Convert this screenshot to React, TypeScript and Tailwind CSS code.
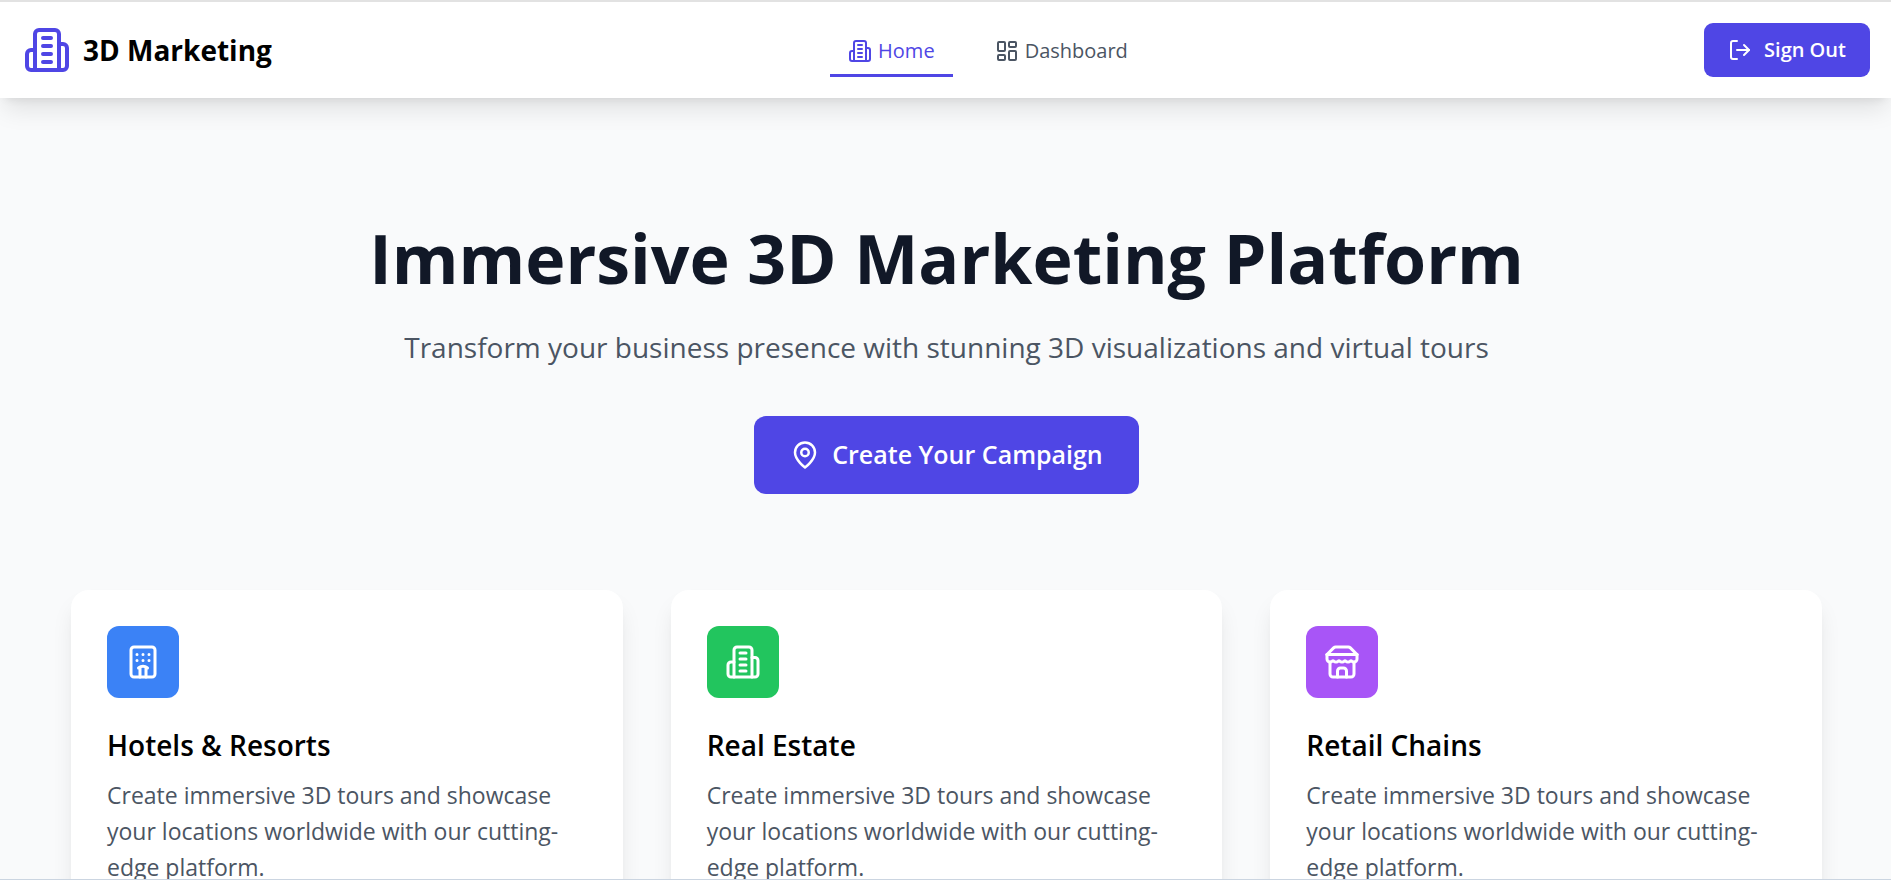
import type { ReactNode } from 'react';

interface IconProps {
  className?: string;
  children?: ReactNode;
}

function Icon({ className, children }: IconProps) {
  return (
    <svg
      viewBox="0 0 24 24"
      fill="none"
      stroke="currentColor"
      strokeWidth={2}
      strokeLinecap="round"
      strokeLinejoin="round"
      aria-hidden="true"
      className={className}
    >
      {children}
    </svg>
  );
}

function BuildingIcon({ className }: IconProps) {
  return (
    <Icon className={className}>
      <path d="M6 22V4a2 2 0 0 1 2-2h8a2 2 0 0 1 2 2v18Z" />
      <path d="M6 12H4a2 2 0 0 0-2 2v6a2 2 0 0 0 2 2h2" />
      <path d="M18 9h2a2 2 0 0 1 2 2v9a2 2 0 0 1-2 2h-2" />
      <path d="M10 6h4M10 10h4M10 14h4M10 18h4" />
    </Icon>
  );
}

function DashboardIcon({ className }: IconProps) {
  return (
    <Icon className={className}>
      <rect width="7" height="9" x="3" y="3" rx="1" />
      <rect width="7" height="5" x="14" y="3" rx="1" />
      <rect width="7" height="9" x="14" y="12" rx="1" />
      <rect width="7" height="5" x="3" y="16" rx="1" />
    </Icon>
  );
}

function LogOutIcon({ className }: IconProps) {
  return (
    <Icon className={className}>
      <path d="M9 21H5a2 2 0 0 1-2-2V5a2 2 0 0 1 2-2h4" />
      <path d="m16 17 5-5-5-5" />
      <path d="M21 12H9" />
    </Icon>
  );
}

function PinIcon({ className }: IconProps) {
  return (
    <Icon className={className}>
      <path d="M20 10c0 6-8 12-8 12s-8-6-8-12a8 8 0 0 1 16 0Z" />
      <circle cx="12" cy="10" r="3" />
    </Icon>
  );
}

function HotelIcon({ className }: IconProps) {
  return (
    <Icon className={className}>
      <rect width="16" height="20" x="4" y="2" rx="2" />
      <path d="M10 22v-6.57M14 15.43V22" />
      <path d="M15 16a5 5 0 0 0-6 0" />
      <path d="M8 7h.01M12 7h.01M16 7h.01M8 11h.01M12 11h.01M16 11h.01" />
    </Icon>
  );
}

function StoreIcon({ className }: IconProps) {
  return (
    <Icon className={className}>
      <path d="m2 7 4.41-4.41A2 2 0 0 1 7.83 2h8.34a2 2 0 0 1 1.42.59L22 7" />
      <path d="M4 12v8a2 2 0 0 0 2 2h12a2 2 0 0 0 2-2v-8" />
      <path d="M15 22v-4a2 2 0 0 0-2-2h-2a2 2 0 0 0-2 2v4" />
      <path d="M2 7h20" />
      <path d="M22 7v3a2 2 0 0 1-2 2a2.7 2.7 0 0 1-1.59-.63.7.7 0 0 0-.82 0A2.7 2.7 0 0 1 16 12a2.7 2.7 0 0 1-1.59-.63.7.7 0 0 0-.82 0A2.7 2.7 0 0 1 12 12a2.7 2.7 0 0 1-1.59-.63.7.7 0 0 0-.82 0A2.7 2.7 0 0 1 8 12a2.7 2.7 0 0 1-1.59-.63.7.7 0 0 0-.82 0A2.7 2.7 0 0 1 4 12a2 2 0 0 1-2-2V7" />
    </Icon>
  );
}

const features = [
  { title: 'Hotels & Resorts', icon: HotelIcon, color: 'bg-[#3b82f6]' },
  { title: 'Real Estate', icon: BuildingIcon, color: 'bg-[#22c55e]' },
  { title: 'Retail Chains', icon: StoreIcon, color: 'bg-[#a855f7]' },
];

function Navbar() {
  return (
    <header className="border-t-2 border-[#e2e2e2] bg-white shadow-[0_15px_23px_-4px_rgba(0,0,0,0.1),0_6px_9px_-6px_rgba(0,0,0,0.1)]">
      <div className="flex h-24 items-center justify-between pr-[21px] pl-[23px]">
        <a href="#" className="flex items-center gap-3 text-black">
          <BuildingIcon className="size-12 text-[#4f46e5]" />
          <span className="text-[28px] font-bold">3D Marketing</span>
        </a>

        <nav className="flex gap-6 text-[20px] font-medium">
          <a
            href="#home"
            className="flex h-[54px] items-center gap-1.5 border-b-3 border-[#4f46e5] px-4.5 pt-1 text-[#4f46e5]"
          >
            <BuildingIcon className="size-6" />
            Home
          </a>
          <a
            href="#dashboard"
            className="flex h-[54px] items-center gap-1.5 border-b-3 border-transparent px-4.5 pt-1 text-[#4b5563]"
          >
            <DashboardIcon className="size-6" />
            Dashboard
          </a>
        </nav>

        <button
          type="button"
          className="flex h-[54px] items-center gap-3 rounded-[9px] bg-[#4f46e5] px-6 text-[20px] font-semibold text-white"
        >
          <LogOutIcon className="size-6" />
          Sign Out
        </button>
      </div>
    </header>
  );
}

export default function App() {
  return (
    <div className="h-screen overflow-hidden border-b border-[#cbd5e1] bg-[#f9fafb] font-['Segoe_UI','Open_Sans',sans-serif]">
      <Navbar />

      <main className="pt-[120px] pr-[69px] pl-[71px]">
        <section className="flex flex-col items-center text-center">
          <h1 className="text-[68px] leading-[80px] font-bold text-[#111827]">
            Immersive 3D Marketing Platform
          </h1>
          <p className="mt-7 text-[28px] leading-[42px] text-[#4b5563]">
            Transform your business presence with stunning 3D visualizations and virtual tours
          </p>
          <button
            type="button"
            className="mt-12 flex h-[78px] items-center gap-3 rounded-xl bg-[#4f46e5] px-9 text-[25px] font-semibold text-white"
          >
            <PinIcon className="size-[30px]" />
            Create Your Campaign
          </button>
        </section>

        <section className="mt-24 grid grid-cols-3 gap-12">
          {features.map(({ title, icon: FeatureIcon, color }) => (
            <article
              key={title}
              className="rounded-[18px] bg-white p-9 shadow-[0_15px_23px_-4px_rgba(0,0,0,0.1),0_6px_9px_-6px_rgba(0,0,0,0.1)]"
            >
              <div className={`flex size-[72px] items-center justify-center rounded-xl text-white ${color}`}>
                <FeatureIcon className="size-9" />
              </div>
              <h3 className="mt-[26px] text-[28px] leading-[42px] font-semibold text-black">{title}</h3>
              <p className="mt-[11px] text-[23px] leading-9 text-[#4b5563]">
                Create immersive 3D tours and showcase your locations worldwide with our cutting-edge platform.
              </p>
            </article>
          ))}
        </section>
      </main>
    </div>
  );
}
